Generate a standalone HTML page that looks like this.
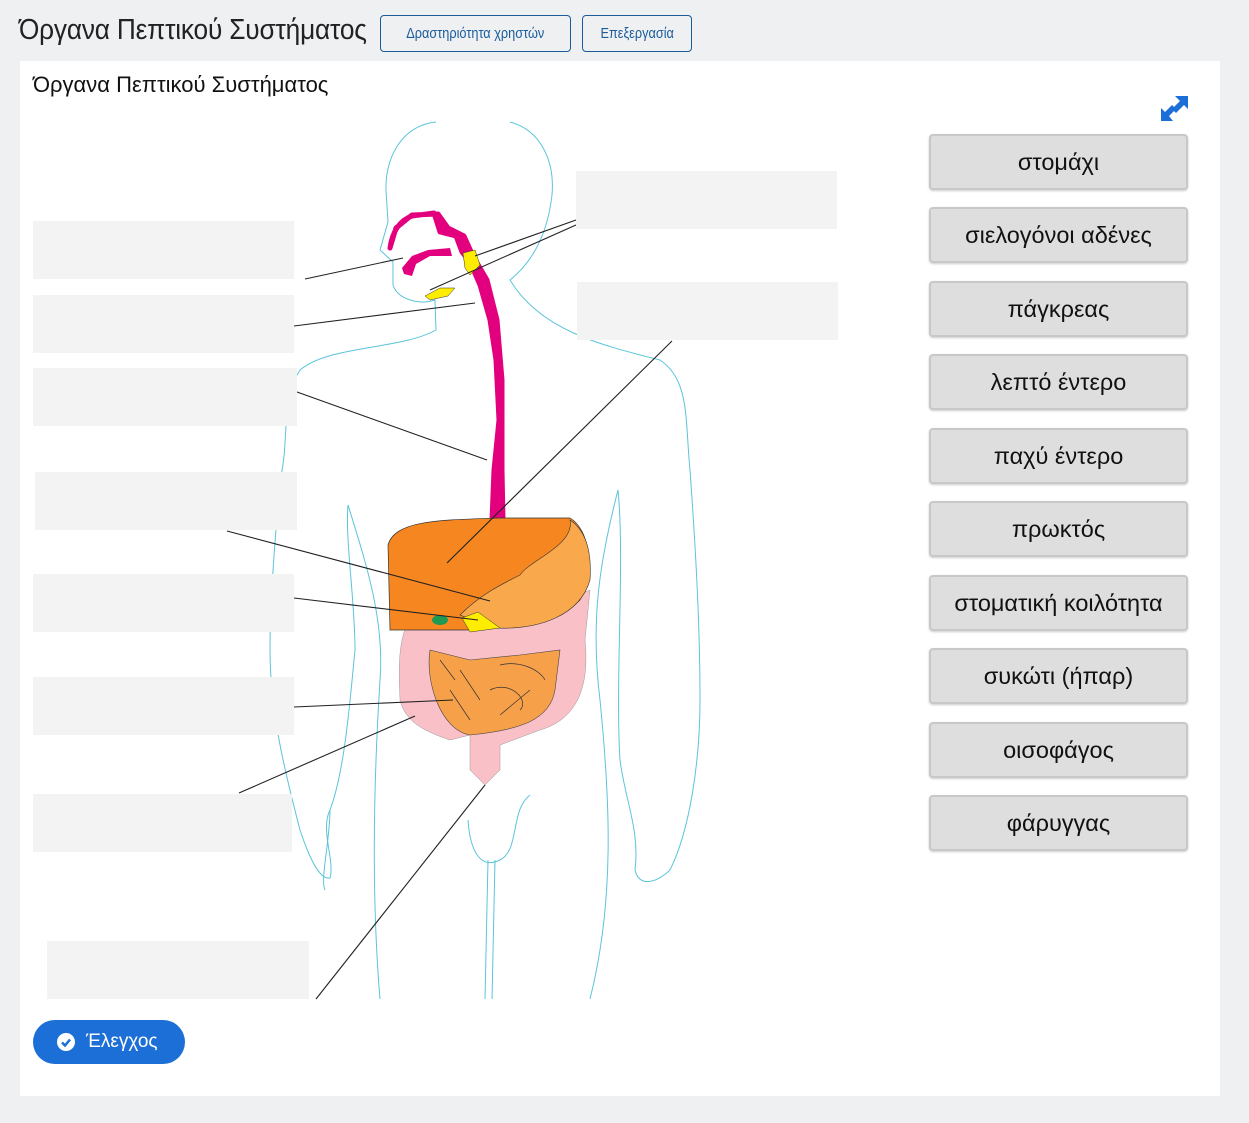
<!DOCTYPE html>
<html><head><meta charset="utf-8"><style>
body{margin:0;background:#eef0f2;width:1249px;height:1123px;position:relative;font-family:"Liberation Sans",sans-serif;overflow:hidden}
.h1{position:absolute;left:19px;top:14px;font-size:29px;color:#222;transform:scaleX(.905);transform-origin:left;letter-spacing:-.2px;white-space:nowrap}
.tb{position:absolute;top:15px;height:37px;border:1px solid #1a5b9b;border-radius:4px;color:#1a5b9b;font-size:15px;line-height:36px;text-align:center;box-sizing:border-box}
.tb span{display:inline-block;transform:scaleX(.85)}
.panel{position:absolute;left:20px;top:61px;width:1200px;height:1035px;background:#fff}
.t2{position:absolute;left:33px;top:72px;font-size:22px;color:#111;white-space:nowrap}
.dz{position:absolute;background:#f3f3f3}
.ans{position:absolute;left:929px;width:259px;height:56px;background:#dedede;border:2px solid #c8c8c8;border-radius:4px;box-sizing:border-box;text-align:center;line-height:52px;font-size:23.5px;color:#111;box-shadow:0 1px 2px rgba(0,0,0,.2)}
.btn{position:absolute;left:33px;top:1020px;width:152px;height:44px;background:#1b6fd6;border-radius:22px;color:#fff;font-size:19px;line-height:44px}
</style></head><body>
<div class="h1">Όργανα Πεπτικού Συστήματος</div>
<div class="tb" style="left:380px;width:191px"><span>Δραστηριότητα χρηστών</span></div>
<div class="tb" style="left:582px;width:110px"><span>Επεξεργασία</span></div>
<div class="panel"></div>
<div class="t2">Όργανα Πεπτικού Συστήματος</div>
<svg style="position:absolute;left:0;top:0" width="1249" height="1123">
<g fill="none" stroke="#5bc4d9" stroke-width="1">
<path d="M436 122 C400 126 385 160 386 190 L388 222 L380 250 L393 262 L393 285 C398 300 420 305 435 300 L436 330 C400 350 330 345 300 370 C280 400 290 440 280 480 C275 540 270 600 270 650 C270 720 290 790 300 830 C310 860 320 880 330 878 C335 860 320 830 330 810 C345 770 350 700 355 650 C355 600 345 540 348 505 C365 560 385 620 380 680 C375 760 370 880 380 999"/>
<path d="M510 122 C540 130 555 160 552 195 C548 230 535 260 510 280 C540 330 600 345 660 360 C690 380 685 420 690 470 C695 540 700 620 700 700 C700 760 690 830 670 870 C660 880 640 890 635 870 C640 830 625 800 620 760 C615 680 625 560 618 490 C600 560 590 620 600 700 C610 800 615 900 590 999"/>
<path d="M488 860 L485 999 M495 860 L492 999"/>
<path d="M330 810 C330 840 320 880 325 890 M530 795 C510 810 520 850 500 860 C480 870 470 850 468 820"/>
</g>
<path d="M390 248 C392 232 400 220 412 216 L434 213 L440 232 L456 236 L462 252 L470 262 L480 285 L490 320 L496 360 L499 420 L494 470 L492 520 L503 520 L502 470 L502 380 L497 320 L487 280 L473 256 L464 236 L448 228 L438 214 L412 215 L396 228 Z" fill="#e3007e" stroke="#e3007e" stroke-width="5" stroke-linejoin="round"/>
<path d="M402 268 L412 256 L428 250 L450 248 L452 256 L430 256 L416 264 L412 276 L404 274 Z" fill="#e3007e"/>
<path d="M463 253 L475 250 L480 265 L470 275 L465 268Z M425 296 L440 288 L455 288 L448 296 L430 300Z" fill="#ffed00" stroke="#333" stroke-width=".5"/>
<path d="M410 620 C395 640 400 690 400 700 C405 720 420 730 450 740 L470 735 L470 770 L485 785 L500 770 L500 745 L540 730 C575 720 590 690 585 640 L590 590 L540 610 L450 625Z" fill="#f9c0c8" stroke="#999" stroke-width=".5"/>
<path d="M430 650 C425 680 440 730 470 735 C520 730 550 720 555 690 L560 650 L520 655 L470 660Z" fill="#f7a04a" stroke="#444" stroke-width=".6"/>
<path d="M460 670 L480 700 M490 690 C510 680 530 700 520 710 M450 690 L470 720 M500 715 L530 690 M440 660 L455 680 M500 665 C520 660 540 670 545 680" stroke="#333" fill="none" stroke-width=".7"/>
<path d="M388 545 C395 520 440 520 500 518 L570 518 C590 530 595 570 580 600 C560 620 520 628 470 630 L390 630Z" fill="#f6861f" stroke="#333" stroke-width=".7"/>
<path d="M570 520 C575 545 530 560 520 575 C500 585 480 595 460 615 L495 628 C540 630 580 615 590 580 C592 550 585 530 570 520Z" fill="#f9a84c" stroke="#333" stroke-width=".6"/>
<path d="M462 618 L478 612 L500 628 L470 632Z" fill="#ffed00" stroke="#333" stroke-width=".5"/>
<ellipse cx="440" cy="620" rx="8" ry="5" fill="#1e9a55"/>
<g stroke="#222" stroke-width="1.1">
<line x1="305" y1="279" x2="403" y2="258"/><line x1="294" y1="326" x2="475" y2="303"/>
<line x1="297" y1="392" x2="487" y2="460"/><line x1="227" y1="531" x2="490" y2="601"/>
<line x1="294" y1="598" x2="478" y2="620"/><line x1="294" y1="707" x2="453" y2="700"/>
<line x1="239" y1="793" x2="415" y2="716"/><line x1="316" y1="999" x2="485" y2="785"/>
<line x1="576" y1="220" x2="475" y2="256"/><line x1="576" y1="225" x2="430" y2="290"/>
<line x1="672" y1="341" x2="447" y2="563"/>
</g>
<g fill="#1b6fd6"><path d="M1175 96 L1188 96 L1188 109 L1184 105 L1176 113 L1172 109 L1180 101Z"/><path d="M1161 121 L1161 108 L1165 112 L1172 105 L1176 109 L1169 116 L1173 121Z"/></g>
</svg>
<div class="dz" style="left:33px;top:221px;width:261px;height:58px"></div>
<div class="dz" style="left:33px;top:295px;width:261px;height:58px"></div>
<div class="dz" style="left:33px;top:368px;width:264px;height:58px"></div>
<div class="dz" style="left:35px;top:472px;width:262px;height:58px"></div>
<div class="dz" style="left:33px;top:574px;width:261px;height:58px"></div>
<div class="dz" style="left:33px;top:677px;width:261px;height:58px"></div>
<div class="dz" style="left:33px;top:794px;width:259px;height:58px"></div>
<div class="dz" style="left:47px;top:941px;width:262px;height:58px"></div>
<div class="dz" style="left:576px;top:171px;width:261px;height:58px"></div>
<div class="dz" style="left:577px;top:282px;width:261px;height:58px"></div>
<div class="ans" style="top:134px">στομάχι</div>
<div class="ans" style="top:207px">σιελογόνοι αδένες</div>
<div class="ans" style="top:281px">πάγκρεας</div>
<div class="ans" style="top:354px">λεπτό έντερο</div>
<div class="ans" style="top:428px">παχύ έντερο</div>
<div class="ans" style="top:501px">πρωκτός</div>
<div class="ans" style="top:575px">στοματική κοιλότητα</div>
<div class="ans" style="top:648px">συκώτι (ήπαρ)</div>
<div class="ans" style="top:722px">οισοφάγος</div>
<div class="ans" style="top:795px">φάρυγγας</div>
<div class="btn"><svg style="position:absolute;left:24px;top:13px" width="18" height="18"><circle cx="9" cy="9" r="9" fill="#fff"/><path d="M5 9.5 L8 12.5 L13 6.5" stroke="#1b6fd6" stroke-width="2.5" fill="none"/></svg><span style="position:absolute;left:53px">Έλεγχος</span></div>
</body></html>
